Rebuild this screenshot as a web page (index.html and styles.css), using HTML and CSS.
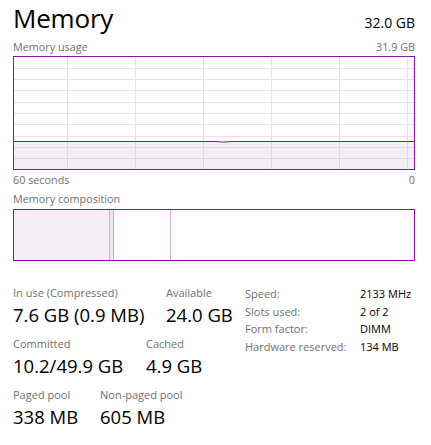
FILE: index.html
```html
<!DOCTYPE html>
<html>
<head>
<meta charset="utf-8">
<link rel="stylesheet" href="styles.css">
</head>
<body>
<div class="page">
  <div class="header">
    <div class="title">Memory</div>
    <div class="total">32.0 GB</div>
  </div>
  <div class="caption-row top-cap">
    <span>Memory usage</span><span>31.9 GB</span>
  </div>
  <svg class="graph" width="402" height="114" viewBox="0 0 402 114">
    <rect x="0" y="85" width="402" height="29" fill="#f2f0f3"/>
    <g stroke="#ecdcf0" stroke-width="1">
      <line x1="1" y1="12.5" x2="401" y2="12.5"/>
      <line x1="1" y1="23.5" x2="401" y2="23.5"/>
      <line x1="1" y1="34.5" x2="401" y2="34.5"/>
      <line x1="1" y1="46.5" x2="401" y2="46.5"/>
      <line x1="1" y1="57.5" x2="401" y2="57.5"/>
      <line x1="1" y1="68.5" x2="401" y2="68.5"/>
      <line x1="1" y1="80.5" x2="401" y2="80.5"/>
      <line x1="54.5" y1="1" x2="54.5" y2="85"/>
      <line x1="122.5" y1="1" x2="122.5" y2="85"/>
      <line x1="190.5" y1="1" x2="190.5" y2="85"/>
      <line x1="258.5" y1="1" x2="258.5" y2="85"/>
      <line x1="326.5" y1="1" x2="326.5" y2="85"/>
      <line x1="394.5" y1="1" x2="394.5" y2="85"/>
    </g>
    <g stroke="#e0d6e3" stroke-width="1">
      <line x1="1" y1="91.5" x2="401" y2="91.5"/>
      <line x1="1" y1="102.5" x2="401" y2="102.5"/>
      <line x1="54.5" y1="86" x2="54.5" y2="113"/>
      <line x1="122.5" y1="86" x2="122.5" y2="113"/>
      <line x1="190.5" y1="86" x2="190.5" y2="113"/>
      <line x1="258.5" y1="86" x2="258.5" y2="113"/>
      <line x1="326.5" y1="86" x2="326.5" y2="113"/>
      <line x1="394.5" y1="86" x2="394.5" y2="113"/>
    </g>
    <path d="M1 85.5 H203 Q210 86.8 217 85.5 H401" fill="none" stroke="#8b12ae" stroke-width="1"/>
    <rect x="0.5" y="0.5" width="401" height="113" fill="none" stroke="#8b12ae" stroke-width="1"/>
  </svg>
  <div class="caption-row axis-cap">
    <span>60 seconds</span><span>0</span>
  </div>
  <div class="caption-row comp-cap">
    <span>Memory composition</span>
  </div>
  <div class="composition">
    <div class="seg inuse"></div>
    <div class="seg modified"></div>
    <div class="seg standby"></div>
    <div class="seg free"></div>
  </div>
  <div class="details">
    <div class="stats">
      <div class="stat-row">
        <div class="stat w-inuse"><div class="label">In use (Compressed)</div><div class="value">7.6 GB (0.9 MB)</div></div>
        <div class="stat"><div class="label">Available</div><div class="value">24.0 GB</div></div>
      </div>
      <div class="stat-row">
        <div class="stat w-commit"><div class="label">Committed</div><div class="value">10.2/49.9 GB</div></div>
        <div class="stat"><div class="label">Cached</div><div class="value">4.9 GB</div></div>
      </div>
      <div class="stat-row">
        <div class="stat w-paged"><div class="label">Paged pool</div><div class="value">338 MB</div></div>
        <div class="stat"><div class="label">Non-paged pool</div><div class="value">605 MB</div></div>
      </div>
    </div>
    <div class="props">
      <div class="pk">Speed:</div><div class="pv">2133 MHz</div>
      <div class="pk">Slots used:</div><div class="pv">2 of 2</div>
      <div class="pk">Form factor:</div><div class="pv">DIMM</div>
      <div class="pk">Hardware reserved:</div><div class="pv">134 MB</div>
    </div>
  </div>
</div>
</body>
</html>
```
FILE: styles.css
```css
html, body {
  margin: 0;
  padding: 0;
  background: #ffffff;
}
body {
  font-family: "Open Sans", "Noto Sans", sans-serif;
  color: #000;
}
.page {
  width: 402px;
  padding: 0 0 0 13px;
}
.header {
  display: flex;
  justify-content: space-between;
  align-items: baseline;
  height: 38px;
}
.title {
  font-size: 26px;
  line-height: 36px;
  letter-spacing: -0.2px;
}
.total {
  font-size: 14px;
  line-height: 20px;
}
.caption-row {
  display: flex;
  justify-content: space-between;
  font-size: 10.8px;
  line-height: 14px;
  color: #707070;
}
.top-cap {
  height: 18px;
  align-items: center;
}
.graph {
  display: block;
}
.axis-cap {
  margin-top: 3px;
}
.comp-cap {
  margin-top: 5px;
  height: 17px;
}
.composition {
  display: flex;
  height: 52px;
  box-sizing: border-box;
  border: 1px solid #8b12ae;
}
.seg {
  height: 100%;
}
.inuse {
  width: 95px;
  background: #f2f0f3;
  border-right: 1px solid #cfaed8;
}
.modified {
  width: 3px;
  background: #efe3f1;
  border-right: 1px solid #cfaed8;
}
.standby {
  width: 56px;
  border-right: 1px solid #cfaed8;
}
.free {
  flex: 1;
}
.details {
  display: flex;
  align-items: flex-start;
  margin-top: 24px;
}
.stats {
  width: 232px;
}
.stat-row {
  display: flex;
  margin-bottom: 8px;
}
.w-inuse { width: 153px; }
.w-commit { width: 133px; }
.w-paged { width: 87px; }
.label {
  font-size: 11px;
  line-height: 16px;
  color: #707070;
}
.value {
  font-size: 18.5px;
  line-height: 27px;
}
.props {
  display: grid;
  grid-template-columns: 115px auto;
  align-content: start;
  font-size: 11px;
  line-height: 17.7px;
}
.pk {
  color: #707070;
}
.pv {
  color: #000;
}
```
